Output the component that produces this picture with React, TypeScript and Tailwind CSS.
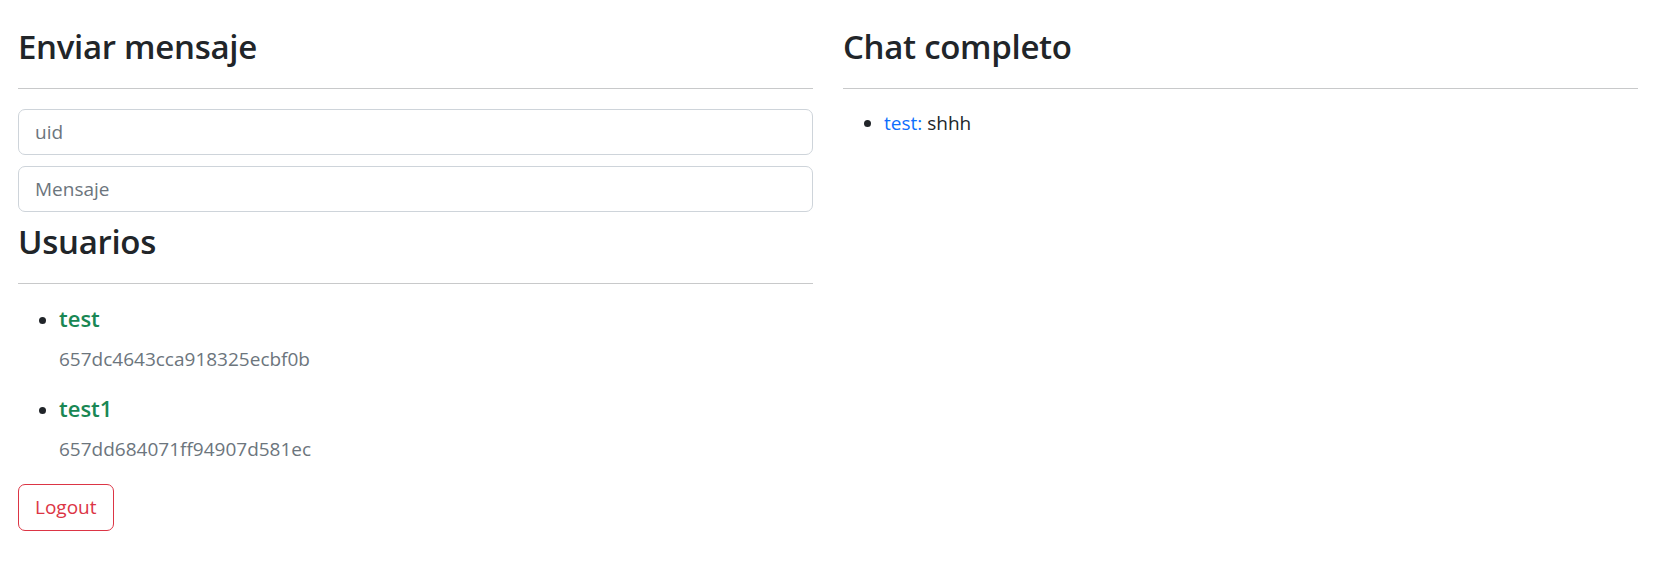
import React from 'react';

const users = [
  { name: 'test', uid: '657dc4643cca918325ecbf0b' },
  { name: 'test1', uid: '657dd684071ff94907d581ec' },
];

const messages = [{ from: 'test', text: 'shhh' }];

const font = { fontFamily: '"Open Sans", "Noto Sans", sans-serif' };

const Title = ({ children }: { children: React.ReactNode }) => (
  <>
    <h2 className="text-[33px] leading-[46px] font-semibold text-[#212529] tracking-[-0.3px]">{children}</h2>
    <hr className="mt-[18px] mb-[20px] border-0 border-t border-[#c8c9ca]" />
  </>
);

export default function App() {
  return (
    <div style={font} className="min-h-screen bg-white pt-[24px] pl-[18px] pr-[23px] text-[#212529]">
      <div className="grid grid-cols-2 gap-x-[30px]">
        <div>
          <Title>Enviar mensaje</Title>
          <div className="flex flex-col gap-[11px]">
            <input
              placeholder="uid"
              className="h-[46px] w-full rounded-[7px] border border-[#ced4da] px-[16px] text-[19px] placeholder:text-[#6c757d] outline-none"
            />
            <input
              placeholder="Mensaje"
              className="h-[46px] w-full rounded-[7px] border border-[#ced4da] px-[16px] text-[19px] placeholder:text-[#6c757d] outline-none"
            />
          </div>
          <div className="mt-[7px]">
            <Title>Usuarios</Title>
          </div>
          <ul className="mt-[6px] list-disc pl-[41px] text-[19px]">
            {users.map((u) => (
              <li key={u.uid} className="mb-[21px]">
                <h5 className="text-[22px] leading-[29px] font-semibold text-[#198754]">{u.name}</h5>
                <p className="mt-[12px] text-[19px] leading-[28px] text-[#6c757d]">{u.uid}</p>
              </li>
            ))}
          </ul>
          <button className="h-[47px] rounded-[7px] border border-[#dc3545] px-[16px] text-[19px] text-[#dc3545]">
            Logout
          </button>
        </div>
        <div>
          <Title>Chat completo</Title>
          <ul className="mt-[2px] list-disc pl-[41px] text-[19px] leading-[29px]">
            {messages.map((m, i) => (
              <li key={i}>
                <span className="text-[#0d6efd]">{m.from}:</span> {m.text}
              </li>
            ))}
          </ul>
        </div>
      </div>
    </div>
  );
}
